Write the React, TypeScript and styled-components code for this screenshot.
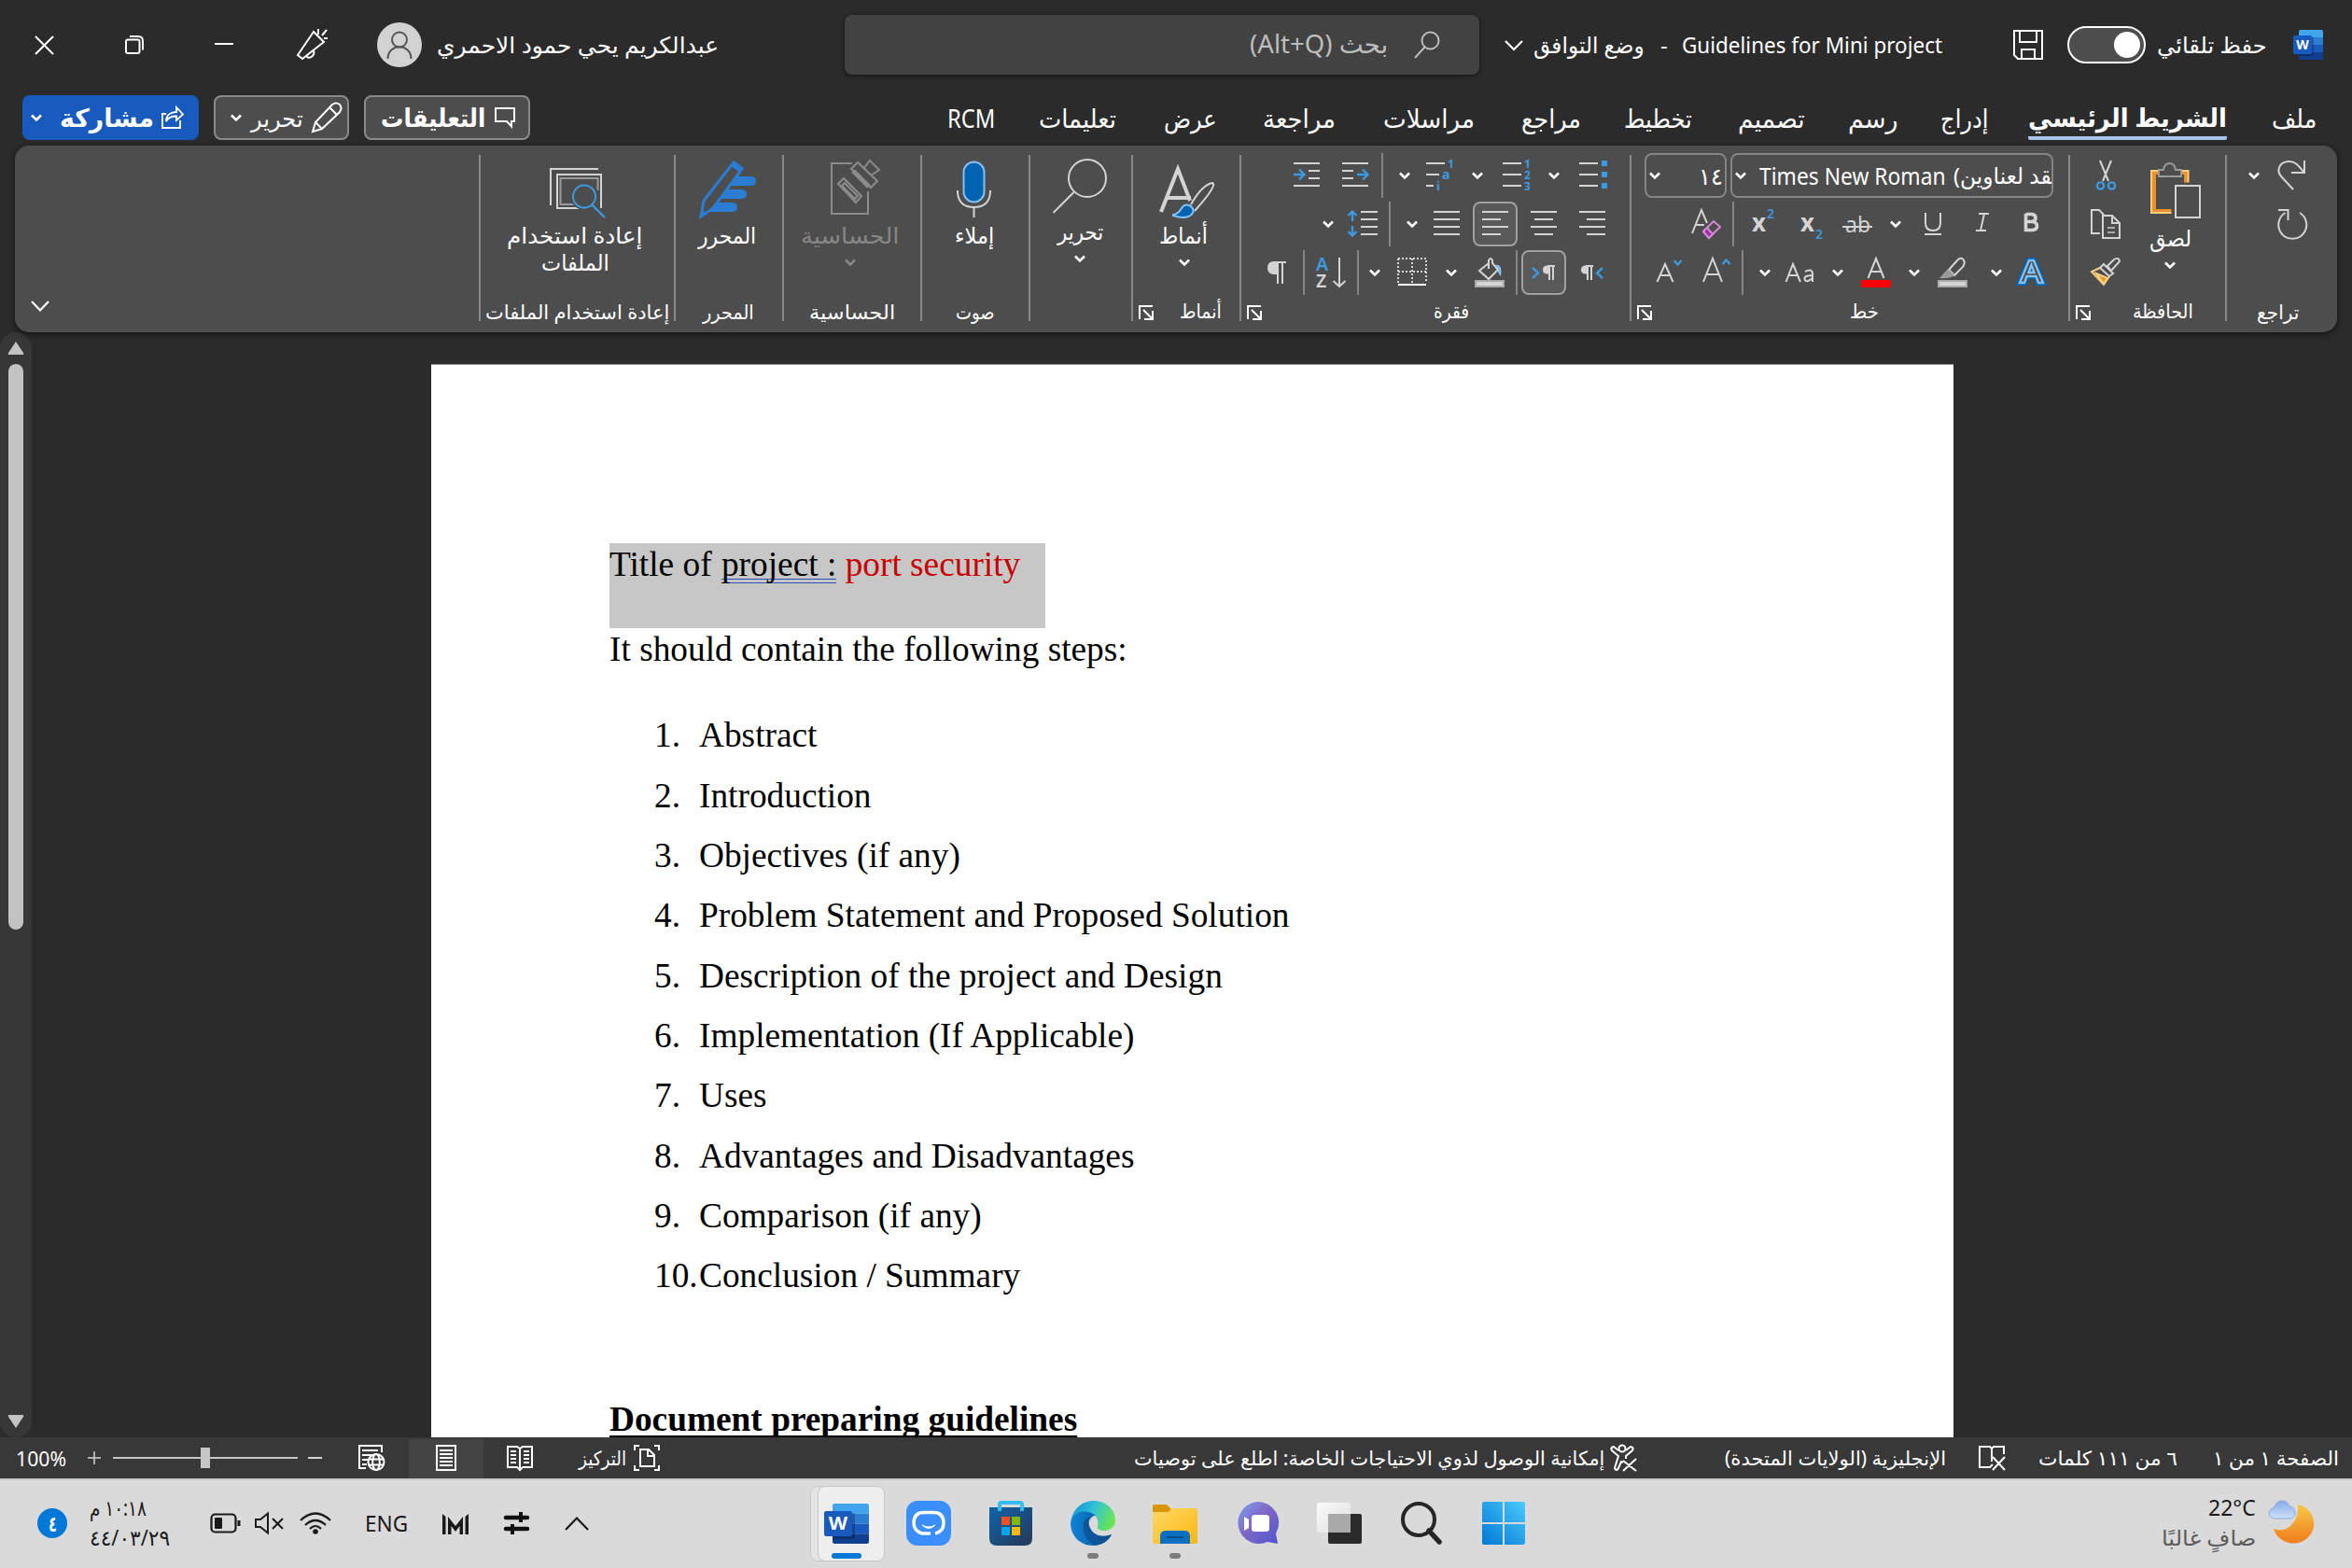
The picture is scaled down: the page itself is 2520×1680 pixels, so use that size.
import React, { useLayoutEffect, useRef, useState } from 'react';
import styled, { createGlobalStyle, css } from 'styled-components';

const Global = createGlobalStyle`
  html, body { margin: 0; padding: 0; background: #2b2b2b; overflow: hidden; }
  * { box-sizing: border-box; }
  svg { display: block; flex: none; overflow: visible; }
`;

const ui = `"Noto Sans", "Open Sans", "DejaVu Sans", sans-serif`;
const light = '#d4d4d4';
const blue = '#3b9ae0';

/* ---------- text fitted to its column ---------- */

const LabelBox = styled.span<{ $w: number; $l: number; $size: number; $bold?: boolean; $color: string; $dy: number }>`
  display: block;
  flex: none;
  direction: ltr;
  width: ${(p) => p.$w}px;
  margin-left: ${(p) => p.$l}px;
  margin-top: ${(p) => p.$dy}px;
  height: ${(p) => Math.round(p.$size * 1.4)}px;
  line-height: ${(p) => Math.round(p.$size * 1.4)}px;
  font-size: ${(p) => p.$size}px;
  font-weight: ${(p) => (p.$bold ? 700 : 400)};
  color: ${(p) => p.$color};
  white-space: nowrap;
`;
const LabelInk = styled.span<{ $rtl: boolean }>`
  display: inline-block;
  transform-origin: 0 50%;
  direction: ${(p) => (p.$rtl ? 'rtl' : 'ltr')};
`;

interface LabelProps {
  w: number;
  l?: number;
  size?: number;
  bold?: boolean;
  color?: string;
  dy?: number;
  ltr?: boolean;
  children: string;
}

function Label({ w, l = 0, size = 24, bold, color = '#fff', dy = 0, ltr = false, children }: LabelProps) {
  const ink = useRef<HTMLSpanElement>(null);
  const [scale, setScale] = useState(1);
  useLayoutEffect(() => {
    if (ink.current) setScale(w / ink.current.offsetWidth);
  }, [w, children]);
  return (
    <LabelBox $w={w} $l={l} $size={size} $bold={bold} $color={color} $dy={dy}>
      <LabelInk ref={ink} $rtl={!ltr} style={{ transform: `scaleX(${scale})` }}>
        {children}
      </LabelInk>
    </LabelBox>
  );
}

/* ---------- icon holder ---------- */

const Slot = styled.span<{ $l?: number }>`
  display: block;
  flex: none;
  margin-left: ${(p) => p.$l ?? 0}px;
`;

interface IconProps {
  l?: number;
  w?: number;
  h?: number;
  stroke?: string;
  sw?: number;
  children: React.ReactNode;
}

function Icon({ l, w = 32, h = 32, stroke = light, sw = 2, children }: IconProps) {
  return (
    <Slot $l={l}>
      <svg width={w} height={h} viewBox={`0 0 ${w} ${h}`} fill="none" stroke={stroke} strokeWidth={sw} fontFamily={ui}>
        {children}
      </svg>
    </Slot>
  );
}

const Chevron = ({ l, color = '#fff' }: { l?: number; color?: string }) => (
  <Icon l={l} w={12} h={8} stroke={color} sw={2.6}>
    <path d="M1 1.5L6 6.5L11 1.5" />
  </Icon>
);

/* ---------- frame ---------- */

const Screen = styled.div`
  width: 2520px;
  height: 1680px;
  display: flex;
  flex-direction: column;
  background: #2b2b2b;
  font-family: ${ui};
  overflow: hidden;
`;
const TitleBar = styled.header`
  height: 96px;
  display: flex;
  align-items: center;
`;
const Avatar = styled.div`
  width: 48px;
  height: 48px;
  margin-left: 52px;
  border-radius: 50%;
  background: #d2d2d2;
  display: flex;
  justify-content: center;
  padding-top: 9px;
`;
const Search = styled.div`
  width: 680px;
  height: 64px;
  margin-left: 135px;
  border-radius: 8px;
  background: #424242;
  box-shadow: 0 1px 4px #111;
  display: flex;
  align-items: center;
`;
const Toggle = styled.div`
  width: 84px;
  height: 40px;
  margin-left: 26px;
  border: 2px solid #fff;
  border-radius: 20px;
  background: #4d4d4d;
  display: flex;
  align-items: center;
  justify-content: flex-end;
  padding-right: 4px;
`;
const Knob = styled.div`
  width: 28px;
  height: 28px;
  border-radius: 50%;
  background: #fff;
`;

const TabRow = styled.nav`
  height: 60px;
  padding-top: 6px;
  display: flex;
  align-items: flex-start;
`;
const Action = styled.div<{ $w: number; $l: number; $primary?: boolean }>`
  width: ${(p) => p.$w}px;
  height: 48px;
  margin-left: ${(p) => p.$l}px;
  border-radius: 8px;
  border: 2px solid ${(p) => (p.$primary ? '#185abd' : '#8a8a8a')};
  background: ${(p) => (p.$primary ? '#185abd' : '#4d4d4d')};
  display: flex;
  align-items: center;
`;
const Tab = styled.div<{ $l: number; $active?: boolean }>`
  height: 48px;
  margin-left: ${(p) => p.$l}px;
  display: flex;
  align-items: center;
  ${(p) =>
    p.$active &&
    css`
      border-bottom: 4px solid #a9c3ef;
      padding-top: 4px;
      border-radius: 0 0 2px 2px;
    `}
`;

/* ---------- ribbon ---------- */

const Ribbon = styled.section`
  width: 2488px;
  height: 200px;
  margin: 0 16px;
  border-radius: 15px;
  background: #4d4d4d;
  box-shadow: 0 2px 6px #111;
  display: flex;
  flex: none;
  position: relative;
  z-index: 1;
`;
const Rule = styled.i`
  flex: none;
  width: 2px;
  height: 178px;
  margin-top: 10px;
  background: #8a8a8a;
`;
const Group = styled.div<{ $w: number }>`
  flex: none;
  width: ${(p) => p.$w}px;
  height: 200px;
  padding-top: 8px;
  display: flex;
  flex-direction: column;
`;
const Body = styled.div`
  height: 157px;
  display: flex;
`;
const Rows = styled.div`
  flex: none;
  display: flex;
  flex-direction: column;
  gap: 4px;
`;
const ToolRow = styled.div`
  height: 48px;
  display: flex;
  align-items: center;
`;
const Split = styled.i<{ $l: number }>`
  flex: none;
  width: 2px;
  height: 48px;
  margin-left: ${(p) => p.$l}px;
  background: #858585;
`;
const Pressed = styled.div<{ $l: number }>`
  flex: none;
  width: 48px;
  height: 48px;
  margin-left: ${(p) => p.$l}px;
  border: 2px solid #a0a0a0;
  border-radius: 8px;
  background: #595959;
  display: flex;
  align-items: center;
  justify-content: center;
`;
const Field = styled.div<{ $w: number; $l: number }>`
  flex: none;
  width: ${(p) => p.$w}px;
  height: 48px;
  margin-left: ${(p) => p.$l}px;
  padding-left: 3px;
  border: 2px solid #858585;
  border-radius: 8px;
  display: flex;
  align-items: center;
  overflow: hidden;
`;
const Footer = styled.div`
  height: 28px;
  display: flex;
  align-items: center;
`;
const BigTool = styled.div<{ $top?: number }>`
  flex: none;
  width: 100%;
  padding-top: ${(p) => p.$top ?? 0}px;
  display: flex;
  flex-direction: column;
  align-items: flex-start;
`;
const Art = styled.div`
  height: 68px;
`;
const MenuMark = styled.div<{ $h: number; $l: number }>`
  padding: ${(p) => p.$h}px 0 0 ${(p) => p.$l}px;
`;
const PasteColumn = styled.div`
  flex: none;
  width: 60px;
  margin-left: 28px;
`;
const Collapse = styled.div`
  padding: 158px 0 0 17px;
`;

const Launcher = ({ l }: { l: number }) => (
  <Icon l={l} w={16} h={16} stroke="#fff">
    <path d="M1 15V1H15M5 5L14 14M15 6V15H6" />
  </Icon>
);

const Lines = ({ d }: { d: string }) => <path d={d} stroke={light} strokeWidth="2" />;

/* ---------- document ---------- */

const Workspace = styled.main`
  height: 1184px;
  display: flex;
  overflow: hidden;
`;
const ScrollTrack = styled.div`
  width: 34px;
  height: 1184px;
  border-radius: 17px;
  background: #373737;
  display: flex;
  flex-direction: column;
  align-items: center;
  padding: 10px 0;
`;
const Thumb = styled.div`
  width: 16px;
  height: 606px;
  margin: 10px 0 520px;
  border-radius: 8px;
  background: #c3c3c3;
`;
const Page = styled.article`
  width: 1631px;
  height: 1160px;
  margin: 34px 0 0 428px;
  border-top: 1px solid #9a9a9a;
  background: #fff;
  color: #000;
  font-family: "Liberation Serif", "Times New Roman", serif;
  font-size: 37.33px;
  line-height: 44px;
  white-space: nowrap;
  overflow: hidden;
  padding: 191px 0 0 191px;
`;
const Selected = styled.div`
  width: 467px;
  height: 91px;
  background: #c7c7c7;
  padding-top: 1px;
`;
const Grammar = styled.span`
  margin-left: 1px;
  background: linear-gradient(#2b50b4 0 1px, transparent 1px 4px, #2b50b4 4px 5px) 0 100% / 100% 5px no-repeat;
`;
const Red = styled.span`
  color: #c80000;
`;
const Para = styled.p`
  margin: 1px 0 48.3px;
`;
const Steps = styled.ol`
  list-style: none;
  margin: 0;
  padding: 0 0 0 48px;
`;
const Step = styled.li`
  height: 64.33px;
  display: flex;
`;
const Num = styled.span`
  width: 48px;
`;
const Heading = styled.h2`
  margin: 89px 0 0;
  font-size: 37.33px;
  font-weight: 700;
  text-decoration: underline 3px;
  text-underline-offset: 5px;
  text-decoration-skip-ink: none;
`;

/* ---------- bottom bars ---------- */

const StatusBar = styled.footer`
  height: 44px;
  background: #383838;
  display: flex;
  align-items: center;
`;
const Zoom = styled.div`
  width: 198px;
  height: 22px;
  margin-left: 13px;
  padding-left: 94px;
  background: linear-gradient(#c6c6c6, #c6c6c6) 0 10px / 198px 2px no-repeat;
`;
const ZoomHandle = styled.div`
  width: 10px;
  height: 22px;
  background: #c6c6c6;
`;
const ViewOn = styled.div`
  width: 80px;
  height: 42px;
  margin: 2px 0 0 25px;
  background: #444;
  display: flex;
  align-items: center;
  justify-content: center;
  padding-bottom: 2px;
`;
const Taskbar = styled.footer`
  height: 96px;
  box-shadow: inset 0 2px #c8c8c8;
  background: #dadada;
  display: flex;
  align-items: center;
`;
const Badge = styled.div`
  width: 32px;
  height: 32px;
  margin-left: 40px;
  border-radius: 50%;
  background: #0078d7;
  display: flex;
  align-items: center;
  justify-content: center;
`;
const Clock = styled.div`
  width: 86px;
  margin-left: 24px;
`;
const Apps = styled.div`
  display: flex;
  margin-left: 232px;
`;
const TaskButton = styled.div<{ $open?: boolean }>`
  position: relative;
  width: 88px;
  height: 80px;
  display: flex;
  align-items: center;
  justify-content: center;
  ${(p) =>
    p.$open &&
    css`
      &::before {
        content: '';
        position: absolute;
        left: 5px;
        top: 0;
        width: 70px;
        height: 79px;
        border-radius: 8px;
        background: #e4e4e4;
        border: 1px solid #cbcbcb;
      }
      &::after {
        content: '';
        position: absolute;
        left: 13px;
        top: 0;
        width: 70px;
        height: 79px;
        border-radius: 8px;
        background: #eee;
        border: 1px solid #c6c6c6;
      }
    `}
  svg { position: relative; z-index: 1; }
`;
const Mark = styled.i<{ $on?: boolean }>`
  position: absolute;
  z-index: 2;
  bottom: 2px;
  left: ${(p) => (p.$on ? 28 : 38)}px;
  width: ${(p) => (p.$on ? 32 : 12)}px;
  height: 6px;
  border-radius: 3px;
  background: ${(p) => (p.$on ? '#0078d7' : '#7c7c7c')};
`;
const Weather = styled.div`
  width: 101px;
  margin-left: 661px;
`;

const WordLogo = ({ w, h }: { w: number; h: number }) => (
  <svg width={w} height={h} viewBox="0 0 32 32" preserveAspectRatio="none" fontFamily={ui}>
    <path d="M7.500 0H30.500A1.500 1.500 0 0 1 32 1.500V8H6V1.500A1.500 1.500 0 0 1 7.500 0Z" fill="#41a5ee" />
    <path d="M6 8H32V16H6Z" fill="#2b7cd3" />
    <path d="M6 16H32V24H6Z" fill="#185abd" />
    <path d="M6 24H32V30.500A1.500 1.500 0 0 1 30.500 32H7.500A1.500 1.500 0 0 1 6 30.500Z" fill="#103f91" />
    <rect x="6" y="7.500" width="16" height="20.500" rx="1.500" fill="#000" opacity="0.25" />
    <rect x="0" y="6" width="20" height="20" rx="1.500" fill="#185abd" />
    <text x="10" y="21.200" fontSize="14" fontWeight="700" fill="#fff" textAnchor="middle">W</text>
  </svg>
);

const tabs: [string, number, number][] = [
  ['RCM', 447, 51],
  ['تعليمات', 47, 83],
  ['عرض', 51, 57],
  ['مراجعة', 49, 78],
  ['مراسلات', 51, 98],
  ['مراجع', 50, 64],
  ['تخطيط', 46, 73],
  ['تصميم', 49, 72],
  ['رسم', 46, 54],
  ['إدراج', 45, 52],
];

const steps = [
  'Abstract',
  'Introduction',
  'Objectives (if any)',
  'Problem Statement and Proposed Solution',
  'Description of the project and Design',
  'Implementation (If Applicable)',
  'Uses',
  'Advantages and Disadvantages',
  'Comparison (if any)',
  'Conclusion / Summary',
];

function Title() {
  return (
    <TitleBar>
      <Icon l={37} w={21} h={21} stroke="#fff"><path d="M1 1L20 20M20 1L1 20" /></Icon>
      <Icon l={76} w={20} h={20} stroke="#fff">
        <rect x="1" y="4.500" width="14.500" height="14.500" rx="2" />
        <path d="M5 1H14Q19 1 19 6V15.500" />
      </Icon>
      <Icon l={76} w={20} h={20} stroke="#fff"><path d="M0 9H20" /></Icon>
      <Icon l={68} w={34} h={34} stroke="#fff">
        <path d="M18 3L29 14L6 32L1 28ZM10 29C13 33 20 29 18 23M23 6V0M27 7L32 1M29 10H33" />
      </Icon>
      <Avatar>
        <svg width="28" height="30" viewBox="0 0 28 30" fill="none" stroke="#555" strokeWidth="2">
          <circle cx="14" cy="9.500" r="8" />
          <path d="M1.500 30C1.500 13 26.500 13 26.500 30" />
        </svg>
      </Avatar>
      <Label l={16} w={302}>عبدالكريم يحي حمود الاحمري</Label>
      <Search>
        <Label l={434} w={148} size={27} color="#bdbdbd" dy={-2}>بحث (Alt+Q)</Label>
        <Icon l={28} w={28} h={30} stroke="#bdbdbd"><circle cx="17.500" cy="10.500" r="9" /><path d="M11.500 17.500L1 29" /></Icon>
      </Search>
      <Icon l={27} w={20} h={11} stroke="#fff" sw={2.2}><path d="M1 1L10 10L19 1" /></Icon>
      <Label l={11} w={119}>وضع التوافق</Label>
      <Label l={17} w={8}>-</Label>
      <Label l={15} w={279} ltr>Guidelines for Mini project</Label>
      <Icon l={76} stroke="#fff"><path d="M1 1H31V31H5L1 27ZM7 1V13H25V1M9 31V21H23V31" /></Icon>
      <Toggle><Knob /></Toggle>
      <Label l={12} w={118}>حفظ تلقائي</Label>
      <Slot $l={28}><WordLogo w={32} h={32} /></Slot>
    </TitleBar>
  );
}

function Tabs() {
  return (
    <TabRow>
      <Action $w={189} $l={24} $primary>
        <Chevron l={7} />
        <Label l={19} w={101} size={27} bold>مشاركة</Label>
        <Icon l={8} w={24} h={24} stroke="#fff" sw={1.8}>
          <path d="M5 8H1V23H20V15M5 16C5 9 10 6 16 6V1L23 8.500L16 15V10.500C11 10.500 7 12 5 16Z" />
        </Icon>
      </Action>
      <Action $w={145} $l={16}>
        <Chevron l={16} />
        <Label l={10} w={56} size={25}>تحرير</Label>
        <Icon l={8} w={34} h={34} stroke="#fff">
          <path d="M2 32L5 22L23 3Q27 0 31 3Q34 7 31 11L12 29ZM20 6L28 14M5 22L12 29" />
        </Icon>
      </Action>
      <Action $w={178} $l={16}>
        <Label l={16} w={112} size={27} bold>التعليقات</Label>
        <Icon l={10} w={22} h={22} stroke="#fff"><path d="M1 1H21V15H18V20.500L13 15H1Z" /></Icon>
      </Action>
      {tabs.map(([text, l, w]) => (
        <Tab key={text} $l={l}><Label w={w} size={27} dy={1}>{text}</Label></Tab>
      ))}
      <Tab $l={42} $active><Label w={213} size={27} bold>الشريط الرئيسي</Label></Tab>
      <Tab $l={48}><Label w={48} size={27} dy={1}>ملف</Label></Tab>
    </TabRow>
  );
}

function ParagraphGroup() {
  return (
    <Group $w={416}>
      <Body>
        <Rows>
          <ToolRow>
            <Icon l={54}><Lines d="M2 3H30M18 11H30M18 19H30M2 27H30" /><path d="M2 15H13M8 9.500L13.500 15L8 20.500" stroke={blue} strokeWidth="2.400" /></Icon>
            <Icon l={20}><Lines d="M2 3H30M2 11H14M2 19H14M2 27H30" /><path d="M18 15H29M24 9.500L29.500 15L24 20.500" stroke={blue} strokeWidth="2.400" /></Icon>
            <Split $l={12} />
            <Chevron l={17} />
            <Icon l={15}>
              <Lines d="M2 3H22M2 15H16M2 27H10" />
              <g fill={blue} stroke="none" fontWeight="700"><text x="25" y="8" fontSize="12">1</text><text x="19" y="20" fontSize="14">a</text><text x="13" y="32" fontSize="13">i</text></g>
            </Icon>
            <Chevron l={19} />
            <Icon l={19}>
              <Lines d="M2 3H22M2 15H22M2 27H22" />
              <g fill={blue} stroke="none" fontWeight="700" fontSize="12"><text x="25" y="8">1</text><text x="25" y="20">2</text><text x="25" y="32">3</text></g>
            </Icon>
            <Chevron l={19} />
            <Icon l={19}><Lines d="M2 3H22M2 15H22M2 27H22" /><path d="M26 0H32V6H26ZM26 12H32V18H26ZM26 24H32V30H26Z" fill={blue} stroke="none" /></Icon>
          </ToolRow>
          <ToolRow>
            <Chevron l={87} />
            <Icon l={15}><Lines d="M14 3H32M14 11H32M14 19H32M14 27H32" /><path d="M5 13V3M.5 7L5 2.500L9.500 7M5 18V28M.5 24L5 28.500L9.500 24" stroke={blue} strokeWidth="2.400" /></Icon>
            <Split $l={12} />
            <Chevron l={17} />
            <Icon l={15}><Lines d="M2 3H30M2 11H30M2 19H30M2 27H30" /></Icon>
            <Pressed $l={12}><Icon><Lines d="M2 3H30M2 11H22M2 19H30M2 27H22" /></Icon></Pressed>
            <Icon l={12}><Lines d="M2 3H30M6 11H26M2 19H30M6 27H26" /></Icon>
            <Icon l={20}><Lines d="M2 3H30M10 11H30M2 19H30M10 27H30" /></Icon>
          </ToolRow>
          <ToolRow>
            <Icon l={22}><path d="M13 5H26M17 5V28M22 5V28" /><path d="M17 4H13Q6 4 6 11Q6 18 13 18H17Z" fill={light} stroke="none" /></Icon>
            <Split $l={12} />
            <Icon l={12}>
              <g stroke="none"><text x="0" y="14" fontSize="19.500" fontWeight="600" fill={blue}>A</text><text x="0" y="32" fontSize="19.500" fontWeight="600" fill={light}>Z</text></g>
              <path d="M25 0V31M18.500 25L25 31L31.500 25" />
            </Icon>
            <Split $l={12} />
            <Chevron l={11} />
            <Icon l={18}><path d="M1 1H31V27M1 1V27M16 1V27M1 15H31" strokeDasharray="2 2" /><path d="M1 29H31" stroke="#fff" /></Icon>
            <Chevron l={20} />
            <Icon l={19}>
              <path d="M15 6L5 14L15 23L25 13L19 6V3Q17 -1 15 3V12" />
              <path d="M22 8Q30 6 28 20Q24 16 25 12Z" fill="#84c0f2" stroke="none" />
              <path d="M1 25H31V31H1Z" fill={light} stroke="#aaa" />
            </Icon>
            <Split $l={12} />
            <Pressed $l={4}><Icon><path d="M4 11L10 16.500L4 22" stroke={blue} strokeWidth="2.400" /><path d="M20 9H28M22 9V24M26 9V24" /><path d="M22 8.500H19Q15 9 15 13Q15 17 19 17.500H22Z" fill={light} stroke="none" /></Icon></Pressed>
            <Icon l={12}><path d="M27 11L21 16.500L27 22" stroke={blue} strokeWidth="2.400" /><path d="M9 9H17M11 9V24M15 9V24" /><path d="M11 8.500H8Q4 9 4 13Q4 17 8 17.500H11Z" fill={light} stroke="none" /></Icon>
          </ToolRow>
        </Rows>
      </Body>
      <Footer><Launcher l={6} /><Label l={184} w={38} size={21} dy={-3}>فقرة</Label></Footer>
    </Group>
  );
}

function FontGroup() {
  return (
    <Group $w={468}>
      <Body>
        <Rows>
          <ToolRow>
            <Field $w={88} $l={14}><Chevron /><Label l={41} w={26} size={25}>١٤</Label></Field>
            <Field $w={346} $l={4}>
              <Chevron />
              <Label l={14} w={200} size={25} ltr>Times New Roman</Label>
              <Label l={8} w={112} size={24}>ـقد لعناوين)</Label>
            </Field>
          </ToolRow>
          <ToolRow>
            <Icon l={64}><path d="M1 26L11 1L17 15M5 17H14" /><path d="M13 24L24 13L31 19L19 31Z" stroke="#d68ad6" /><path d="M13 24L17 20L23 27L19 31Z" fill="#9b2fa5" stroke="#d68ad6" /></Icon>
            <Split $l={12} />
            <Icon l={16}><g stroke="none"><text x="3" y="24" fontSize="26" fontWeight="700" fill={light}>x</text><text x="19" y="10" fontSize="14" fontWeight="600" fill={blue}>2</text></g></Icon>
            <Icon l={20}><g stroke="none"><text x="3" y="24" fontSize="26" fontWeight="700" fill={light}>x</text><text x="19" y="32" fontSize="14" fontWeight="600" fill={blue}>2</text></g></Icon>
            <Icon l={16}><text x="3" y="25" fontSize="23" fill={light} stroke="none">ab</text><path d="M0 19H32" /></Icon>
            <Chevron l={19} />
            <Icon l={18}><path d="M8 4V15Q8 23 16 23Q24 23 24 15V4M7 27H25" /></Icon>
            <Icon l={21}><path d="M12 5H23M9 23H20M18 5L14 23" /></Icon>
            <Icon l={20}><path d="M10.500 5.500H17Q21 6 21 9.500Q21 13 17 13.500H10.500M17 13.500Q22.500 14 22.500 18Q22.500 22 17.500 22.500H10.500V5" strokeWidth="3.600" /></Icon>
          </ToolRow>
          <ToolRow>
            <Icon l={24}><path d="M3.500 26L12 7L20.500 26M6.500 19H17.500" /><path d="M21.500 3L25.500 7.500L29.500 3" stroke={blue} strokeWidth="2.400" /></Icon>
            <Icon l={20}><path d="M1 26L11 1L21 26M4.500 18H17.500" /><path d="M21.500 7L25.500 2.500L29.500 7" stroke={blue} strokeWidth="2.400" /></Icon>
            <Split $l={10} />
            <Chevron l={17} />
            <Icon l={15}><path d="M1.500 26L9 7L17 26M4.500 19H14M22 15Q30 11 30 18V26M30 19Q21 19 21.500 23Q23 28 30 22" /></Icon>
            <Chevron l={19} />
            <Icon l={19}><path d="M7.500 22L16 1L24.500 22M10.500 15H21.500" /><path d="M0 24H32V32H0Z" fill="#f00" stroke="none" /></Icon>
            <Chevron l={19} />
            <Icon l={19}>
              <path d="M12 13L22 2Q26 -1 28 3Q30 5 27 10L18 19Z" />
              <path d="M11 12L18 19Q12 23 2 22Z" fill="#9a9a9a" stroke="none" />
              <path d="M1 25H31V31H1Z" fill={light} stroke="#aaa" />
            </Icon>
            <Chevron l={25} />
            <Icon l={15}><path d="M4 27L14 3H19L29 27H24L21.500 20H11.500L9 27ZM13.500 16H19.500L16.500 8Z" fill="#4d4d4d" stroke="#0063b1" strokeWidth="6" /><path d="M4 27L14 3H19L29 27H24L21.500 20H11.500L9 27ZM13.500 16H19.500L16.500 8Z" stroke="#84c0f2" fill="#4d4d4d" strokeWidth="2.400" /></Icon>
          </ToolRow>
        </Rows>
      </Body>
      <Footer><Launcher l={6} /><Label l={212} w={31} size={21} dy={-3}>خط</Label></Footer>
    </Group>
  );
}

function ClipboardGroup() {
  return (
    <Group $w={166}>
      <Body>
        <Rows>
          <ToolRow><Icon l={22}><path d="M10 0L19 22M22 0L13 22" /><circle cx="10.500" cy="27" r="3.600" stroke={blue} strokeWidth="2.400" /><circle cx="22.500" cy="27" r="3.600" stroke={blue} strokeWidth="2.400" /></Icon></ToolRow>
          <ToolRow><Icon l={22}><path d="M10 26H1V1H9L14 6M13 7H23L31 15V31H13ZM23 7V15H31" /><path d="M18 20H26M18 25H26" stroke="#aaa" /></Icon></ToolRow>
          <ToolRow><Icon l={22}><path d="M18 9L25 2Q30 -1 31 4L22 14Z" /><path d="M14 7L24 17L20 20L10 11Z" /><path d="M10 11L1 15L14 29L20 20" stroke="#f8cf7a" /><path d="M6 17L18 22L14 28Z" fill="#e8912d" stroke="#f8cf7a" /></Icon></ToolRow>
        </Rows>
        <PasteColumn>
          <BigTool $top={10}>
            <Art>
              <Icon l={4} w={54} h={60}>
                <path d="M1 9H40.500V54H1Z" stroke="#f8cf7a" fill="#e8912d" />
                <path d="M6 13H36V50H6Z" fill="#4d4d4d" stroke="none" />
                <path d="M9 15V8H14Q15 1 20.500 1Q26 1 27 8H33V15Z" fill="#4d4d4d" stroke="#9a9a9a" />
                <path d="M25 24H53V59H25Z" fill="#4d4d4d" stroke="#4d4d4d" strokeWidth="5" />
                <path d="M27 25H53V59H27Z" />
              </Icon>
            </Art>
            <Label l={3} w={45} size={24} dy={-4}>لصق</Label>
            <MenuMark $h={8} $l={19}><Chevron /></MenuMark>
          </BigTool>
        </PasteColumn>
      </Body>
      <Footer><Launcher l={6} /><Label l={45} w={65} size={21} dy={-3}>الحافظة</Label></Footer>
    </Group>
  );
}

function RibbonBar() {
  return (
    <Ribbon>
      <Group $w={497}>
        <Collapse>
          <Icon w={20} h={12} stroke="#fff" sw={2.2}><path d="M1 1L10 10.500L19 1" /></Icon>
        </Collapse>
      </Group>
      <Rule />
      <Group $w={207}>
        <Body>
          <BigTool $top={10}>
            <Art>
              <Icon l={73} w={62} h={60}>
                <path d="M2 46V7H53" /><path d="M33 49H9V13H56V49" /><path d="M27 45H12.500V17H52.500V30" stroke="#9a9a9a" />
                <circle cx="38" cy="36" r="15" fill="#4d4d4d" stroke="none" /><circle cx="38" cy="36.500" r="12" stroke={blue} /><path d="M46 45L60 59" stroke={blue} strokeWidth="2.400" />
              </Icon>
            </Art>
            <Label l={28} w={145} dy={-7}>إعادة استخدام</Label>
            <Label l={65} w={73} dy={-5}>الملفات</Label>
          </BigTool>
        </Body>
        <Footer><Label l={5} w={197} size={21} dy={-1}>إعادة استخدام الملفات</Label></Footer>
      </Group>
      <Rule />
      <Group $w={114}>
        <Body>
          <BigTool $top={8}>
            <Art>
              <Icon l={24} w={62} h={62}>
                <path d="M42 17H56Q62 17 62 22Q62 27 56 27H34ZM32 31H46Q52 31 52 36Q52 41 46 41H22ZM22 45H36Q42 45 42 50Q42 55 36 55H12Z" fill="#2b7cd3" stroke="none" />
                <path d="M38 2L47 9L16 51L3 60L6 43Z" fill="#4d4d4d" stroke="#2b7cd3" strokeWidth="3" /><path d="M38 0L49 8L45 13L35 6ZM2 62L4 53L10 57Z" fill="#2b7cd3" stroke="none" />
              </Icon>
            </Art>
            <Label l={24} w={62} dy={-5}>المحرر</Label>
          </BigTool>
        </Body>
        <Footer><Label l={29} w={55} size={21} dy={-1}>المحرر</Label></Footer>
      </Group>
      <Rule />
      <Group $w={146}>
        <Body>
          <BigTool $top={8}>
            <Art>
              <Icon l={48} w={56} h={60} stroke="#8c8c8c">
                <path d="M25 3H3V57H42V33" />
                <path d="M10 25L16 19L35 38L29 45ZM14 27L17 24L31 38L28 41Z" />
                <path d="M31 2L24 9L45 29L52 22ZM37 9L44 0L54 10L45 16" />
                <path d="M26 11L43 28" strokeWidth="5" />
              </Icon>
            </Art>
            <Label l={18} w={105} color="#878787" dy={-5}>الحساسية</Label>
            <MenuMark $h={8} $l={65}><Chevron color="#878787" /></MenuMark>
          </BigTool>
        </Body>
        <Footer><Label l={27} w={92} size={21} dy={-1}>الحساسية</Label></Footer>
      </Group>
      <Rule />
      <Group $w={114}>
        <Body>
          <BigTool $top={8}>
            <Art>
              <Icon l={36} w={40} h={62}>
                <rect x="8.500" y="1.500" width="22" height="43" rx="11" fill="#0063b1" stroke="#84c0f2" />
                <path d="M2 32V34Q3 50 19.500 50Q36 50 37 34V32M19.500 50V61" />
              </Icon>
            </Art>
            <Label l={35} w={42} dy={-5}>إملاء</Label>
          </BigTool>
        </Body>
        <Footer><Label l={36} w={41} size={21} dy={-1}>صوت</Label></Footer>
      </Group>
      <Rule />
      <Group $w={108}>
        <Body>
          <BigTool $top={6}>
            <Art>
              <Icon l={24} w={60} h={60}><circle cx="37" cy="21" r="20" /><path d="M22.500 36L.5 58" /></Icon>
            </Art>
            <Label l={29} w={49} dy={-7}>تحرير</Label>
            <MenuMark $h={8} $l={47}><Chevron /></MenuMark>
          </BigTool>
        </Body>
        <Footer />
      </Group>
      <Rule />
      <Group $w={114}>
        <Body>
          <BigTool $top={8}>
            <Art>
              <Icon l={28} w={60} h={62}>
                <path d="M2 55L20 9L33 43M9 40H34" strokeWidth="4" />
                <path d="M34 47Q46 26 57 24Q63 26 38 54" />
                <path d="M15 58Q20 58 24 51Q27 46 32 48Q38 51 36 56Q31 64 15 59Z" fill="#0063b1" stroke="#84c0f2" />
              </Icon>
            </Art>
            <Label l={28} w={52} dy={-5}>أنماط</Label>
            <MenuMark $h={8} $l={49}><Chevron /></MenuMark>
          </BigTool>
        </Body>
        <Footer><Launcher l={6} /><Label l={28} w={45} size={21} dy={-3}>أنماط</Label></Footer>
      </Group>
      <Rule />
      <ParagraphGroup />
      <Rule />
      <FontGroup />
      <Rule />
      <ClipboardGroup />
      <Rule />
      <Group $w={118}>
        <Body>
          <Rows>
            <ToolRow><Chevron l={23} /><Icon l={19}><path d="M17 31L5 18C-2 11 2 1 13 1C21 1 24 8 29 13M29 0V13H15" /></Icon></ToolRow>
            <ToolRow><Icon l={54}><path d="M8.500 4A15 15 0 1 0 24 4M1 1H11.500V12" /></Icon></ToolRow>
          </Rows>
        </Body>
        <Footer><Label l={32} w={45} size={21} dy={-1}>تراجع</Label></Footer>
      </Group>
    </Ribbon>
  );
}

function Doc() {
  return (
    <Workspace>
      <ScrollTrack>
        <svg width="18" height="14" viewBox="0 0 18 14"><path d="M9 0L17 12Q18 14 16 14H2Q0 14 1 12Z" fill="#c3c3c3" /></svg>
        <Thumb />
        <svg width="18" height="14" viewBox="0 0 18 14"><path d="M9 14L17 2Q18 0 16 0H2Q0 0 1 2Z" fill="#c3c3c3" /></svg>
      </ScrollTrack>
      <Page>
        <Selected>
          Title of <Grammar>project :</Grammar> <Red>port security</Red>
        </Selected>
        <Para>It should contain the following steps:</Para>
        <Steps>
          {steps.map((s, i) => (
            <Step key={s}><Num>{i + 1}.</Num>{s}</Step>
          ))}
        </Steps>
        <Heading>Document preparing guidelines</Heading>
      </Page>
    </Workspace>
  );
}

function Status() {
  return (
    <StatusBar>
      <Label l={17} w={54} size={22} ltr>100%</Label>
      <Icon l={23} w={14} h={14} sw={1.5}><path d="M0 7H14M7 0V14" /></Icon>
      <Zoom><ZoomHandle /></Zoom>
      <Icon l={11} w={15} h={14}><path d="M0 7H15" /></Icon>
      <Icon l={38} w={30} h={28} stroke="#fff">
        <path d="M9 25H2V1H26V8M5 6H22M5 11H15M5 16H11M5 21H10" /><circle cx="20" cy="18.500" r="8.500" /><ellipse cx="20" cy="18.500" rx="3.800" ry="8.500" /><path d="M12 15.500H28M12 21.500H28" />
      </Icon>
      <ViewOn><Icon w={22} h={28} stroke="#fff"><path d="M1 1H21V27H1ZM4 6H18M4 10H18M4 14H18M4 18H18M4 22H18" /></Icon></ViewOn>
      <Icon l={25} w={28} h={26} stroke="#fff"><path d="M14 3L11 1H1V23H11L14 26L17 23H27V1H17ZM14 3V25M4 6H10M4 10H10M4 14H10M4 18H10M18 6H24M18 10H24M18 14H24M18 18H24" /></Icon>
      <Label l={49} w={51} size={21}>التركيز</Label>
      <Icon l={8} w={28} h={28} stroke="#fff"><path d="M1 6V1H6M22 1H27V6M1 22V27H6M22 27H27V22M7 5H16L22 11V23H7ZM15 5V12H22" /></Icon>
      <Label l={508} w={504} size={21}>إمكانية الوصول لذوي الاحتياجات الخاصة: اطلع على توصيات</Label>
      <Icon l={6} w={30} h={28} stroke="#fff">
        <circle cx="13" cy="4" r="3.500" /><path d="M9 6L4 2Q0 3 2 6L9 12L5 25Q7 29 9 25L12 18L14 19M17 6L22 2Q26 3 24 6L17 12V15M14 17L28 28M28 15L14 28" />
      </Icon>
      <Label l={93} w={237} size={21}>الإنجليزية (الولايات المتحدة)</Label>
      <Icon l={35} w={30} h={28} stroke="#fff"><path d="M14 4L12 2H1V24H12L15 21M14 4V18M14 4L16 2H27V10M15 13L28 27M28 13L15 27" /></Icon>
      <Label l={34} w={149} size={21}>٦ من ١١١ كلمات</Label>
      <Label l={38} w={135} size={21}>الصفحة ١ من ١</Label>
    </StatusBar>
  );
}

function Tasks() {
  return (
    <Taskbar>
      <Badge><Label w={9} size={23} bold dy={-1}>٤</Label></Badge>
      <Clock>
        <Label w={61} size={23} color="#1a1a1a" dy={-2}>١٠:١٨ م</Label>
        <Label w={86} size={23} color="#1a1a1a">٤٤/٠٣/٢٩</Label>
      </Clock>
      <Icon l={43} w={34} h={22} stroke="#1a1a1a" sw={2.2}><rect x="1.500" y="1.500" width="26" height="19" rx="4" /><rect x="5" y="5" width="8" height="12" rx="1" fill="#1a1a1a" stroke="none" /><path d="M31 8V14" strokeWidth="3" /></Icon>
      <Icon l={14} w={32} h={24} stroke="#1a1a1a"><path d="M1 8H6L14 1.500V22.500L6 16H1ZM19 7L30 18M30 7L19 18" /></Icon>
      <Icon l={16} w={34} h={24} stroke="#1a1a1a" sw={2.2}><path d="M1 9Q17 -6 33 9M6 14Q17 4 28 14M11 18Q17 12 23 18" /><circle cx="17" cy="21" r="2.800" fill="#1a1a1a" stroke="none" /></Icon>
      <Label l={36} w={46} size={24} color="#1a1a1a" ltr>ENG</Label>
      <Icon l={37} w={28} h={23} stroke="#1a1a1a"><path d="M0 1L3.500 4V23H0ZM24.500 4L28 1V23H24.500ZM6 4L14 14L22 4V23H18.500V14L14 20L9.500 14V23H6Z" fill="#1a1a1a" stroke="none" /></Icon>
      <Icon l={38} w={27} h={24} stroke="#111" sw={4.5}><path d="M2 6H25M2 18H25" strokeLinecap="round" /><path d="M18 0V11M9 13V24" strokeWidth="4" /></Icon>
      <Icon l={38} w={26} h={15} stroke="#1a1a1a" sw={2.2}><path d="M1 14L13 1.500L25 14" /></Icon>
      <Apps>
        <TaskButton $open><WordLogo w={48} h={43} /><Mark $on /></TaskButton>
        <TaskButton>
          <svg width="48" height="48" viewBox="0 0 48 48" fill="none">
            <rect width="48" height="48" rx="12" fill="#3b8ffc" />
            <path d="M26 35H17Q8 32 8 24Q8 12.500 19 12.500H29Q40 12.500 40 24Q40 33 31 35" stroke="#fff" strokeWidth="3.500" />
            <path d="M17 26Q24 33 31 26Q24 30 17 26Z" fill="#fff" stroke="#fff" />
          </svg>
        </TaskButton>
        <TaskButton>
          <svg width="48" height="48" viewBox="0 0 48 48" fill="none">
            <defs><linearGradient id="store" x1="0" y1="0" x2="1" y2="1"><stop offset="0" stopColor="#0f64a8" /><stop offset="1" stopColor="#253858" /></linearGradient></defs>
            <path d="M1 7H47V40Q47 48 39 48H9Q1 48 1 40Z" fill="url(#store)" />
            <path d="M12 11V4Q12 2 14 2H34Q36 2 36 4V11" stroke="#33bdf2" strokeWidth="4" />
            <path d="M14 17H23V26H14Z" fill="#f25022" /><path d="M25 17H34V26H25Z" fill="#7fba00" /><path d="M14 28H23V37H14Z" fill="#00a4ef" /><path d="M25 28H34V37H25Z" fill="#ffb900" />
          </svg>
        </TaskButton>
        <TaskButton>
          <svg width="48" height="48" viewBox="0 0 48 48">
            <defs>
              <linearGradient id="edgeTop" x1="0" y1=".2" x2="1" y2=".5"><stop offset="0" stopColor="#0c8edb" /><stop offset=".5" stopColor="#33c3d5" /><stop offset="1" stopColor="#6be650" /></linearGradient>
              <linearGradient id="edgeLow" x1="0" y1="0" x2="1" y2="0"><stop offset="0" stopColor="#0f84d8" /><stop offset="1" stopColor="#0c4f92" /></linearGradient>
            </defs>
            <path d="M0 24C2 9 12 0 25 0C38 0 48 9 48 21C48 31 36 34 31 31C26 28 32 26 28 18C22 8 4 11 0 24Z" fill="url(#edgeTop)" />
            <path d="M0 24C3 9 20 9 27 16C20 16 17 24 22 31C27 39 37 39 44 36C39 46 30 48 24 48C10 48 0 37 0 24Z" fill="url(#edgeLow)" />
            <path d="M14 24C12 36 18 45 28 47.500C36 46 42 41 44 36C37 39 27 39 22 31C18 25 19 19 24 17C18 17 15 20 14 24Z" fill="#0c4f92" opacity=".75" />
          </svg>
          <Mark />
        </TaskButton>
        <TaskButton>
          <svg width="48" height="48" viewBox="0 0 48 48">
            <defs><linearGradient id="folder" x1="0" y1="0" x2="1" y2="1"><stop offset="0" stopColor="#ffd866" /><stop offset="1" stopColor="#fbb812" /></linearGradient></defs>
            <path d="M0 14V6Q0 4 2 4H15L20 9V14Z" fill="#d9960a" />
            <path d="M0 12H17L21 8H46Q48 8 48 10V44Q48 46 46 46H2Q0 46 0 44Z" fill="url(#folder)" />
            <path d="M8 46V38Q8 32 14 32H34Q40 32 40 38V46Z" fill="#0c70c2" /><path d="M15 39H33" stroke="#0a4c86" strokeWidth="2" />
          </svg>
          <Mark />
        </TaskButton>
        <TaskButton>
          <svg width="48" height="48" viewBox="0 0 48 48">
            <defs><linearGradient id="chat" x1="0" y1="0" x2="1" y2="1"><stop offset="0" stopColor="#7ba0f0" /><stop offset=".45" stopColor="#8068c6" /><stop offset="1" stopColor="#4f55d0" /></linearGradient></defs>
            <path d="M24 1A22.500 22.500 0 0 1 44 35L46 46L35 44A22.500 22.500 0 1 1 24 1Z" fill="url(#chat)" />
            <rect x="18" y="15" width="19" height="18" rx="3.500" fill="#fff" /><path d="M10 17L15 20V29L10 32Z" fill="#fff" />
          </svg>
        </TaskButton>
        <TaskButton>
          <svg width="48" height="48" viewBox="0 0 48 48">
            <defs><linearGradient id="pane" x1="0" y1="0" x2="1" y2="1"><stop offset="0" stopColor="#fbfbfb" /><stop offset="1" stopColor="#dcdcdc" /></linearGradient></defs>
            <rect x="12" y="14" width="36" height="32" rx="2" fill="#2a2a2a" />
            <rect x="0" y="2" width="36" height="32" rx="2" fill="url(#pane)" /><path d="M12 14H36V34H12Z" fill="#a9a9a9" />
          </svg>
        </TaskButton>
        <TaskButton>
          <svg width="44" height="46" viewBox="0 0 44 46" fill="none" stroke="#262626" strokeWidth="4"><circle cx="19" cy="19" r="17" /><path d="M30 31L41 43" strokeWidth="5.500" strokeLinecap="round" /></svg>
        </TaskButton>
        <TaskButton>
          <svg width="46" height="46" viewBox="0 0 46 46">
            <defs><linearGradient id="win" x1="0" y1="1" x2="1" y2="0"><stop offset="0" stopColor="#0078d4" /><stop offset="1" stopColor="#4cc9fc" /></linearGradient></defs>
            <path d="M2 0H22V22H0V2Q0 0 2 0ZM24 0H44Q46 0 46 2V22H24ZM0 24H22V46H2Q0 46 0 44ZM24 24H46V44Q46 46 44 46H24Z" fill="url(#win)" />
          </svg>
        </TaskButton>
      </Apps>
      <Weather>
        <Label l={50} w={51} size={23} color="#1a1a1a" dy={-2} ltr>22°C</Label>
        <Label w={101} size={23} color="#5c5c5c">صافٍ غالبًا</Label>
      </Weather>
      <Icon l={14} w={46} h={48}>
        <defs>
          <linearGradient id="moon" x1="0" y1="0" x2="0" y2="1"><stop offset="0" stopColor="#f7c948" /><stop offset="1" stopColor="#f07c1c" /></linearGradient>
          <linearGradient id="cloud" x1="0" y1="0" x2="0" y2="1"><stop offset="0" stopColor="#86aae8" /><stop offset="1" stopColor="#cfe0fa" /></linearGradient>
        </defs>
        <path d="M31 4A22 21 0 1 1 5 30Q17 34 25 25Q32 17 31 4Z" fill="url(#moon)" stroke="none" />
        <path d="M6 19Q0 18 0 13Q1 8 6 7Q8 0 14 0Q20 0 22 6Q28 7 28 13Q28 18 23 19Z" fill="url(#cloud)" stroke="#86aae8" strokeWidth="1" />
      </Icon>
    </Taskbar>
  );
}

export default function App() {
  return (
    <Screen>
      <Global />
      <Title />
      <Tabs />
      <RibbonBar />
      <Doc />
      <Status />
      <Tasks />
    </Screen>
  );
}
